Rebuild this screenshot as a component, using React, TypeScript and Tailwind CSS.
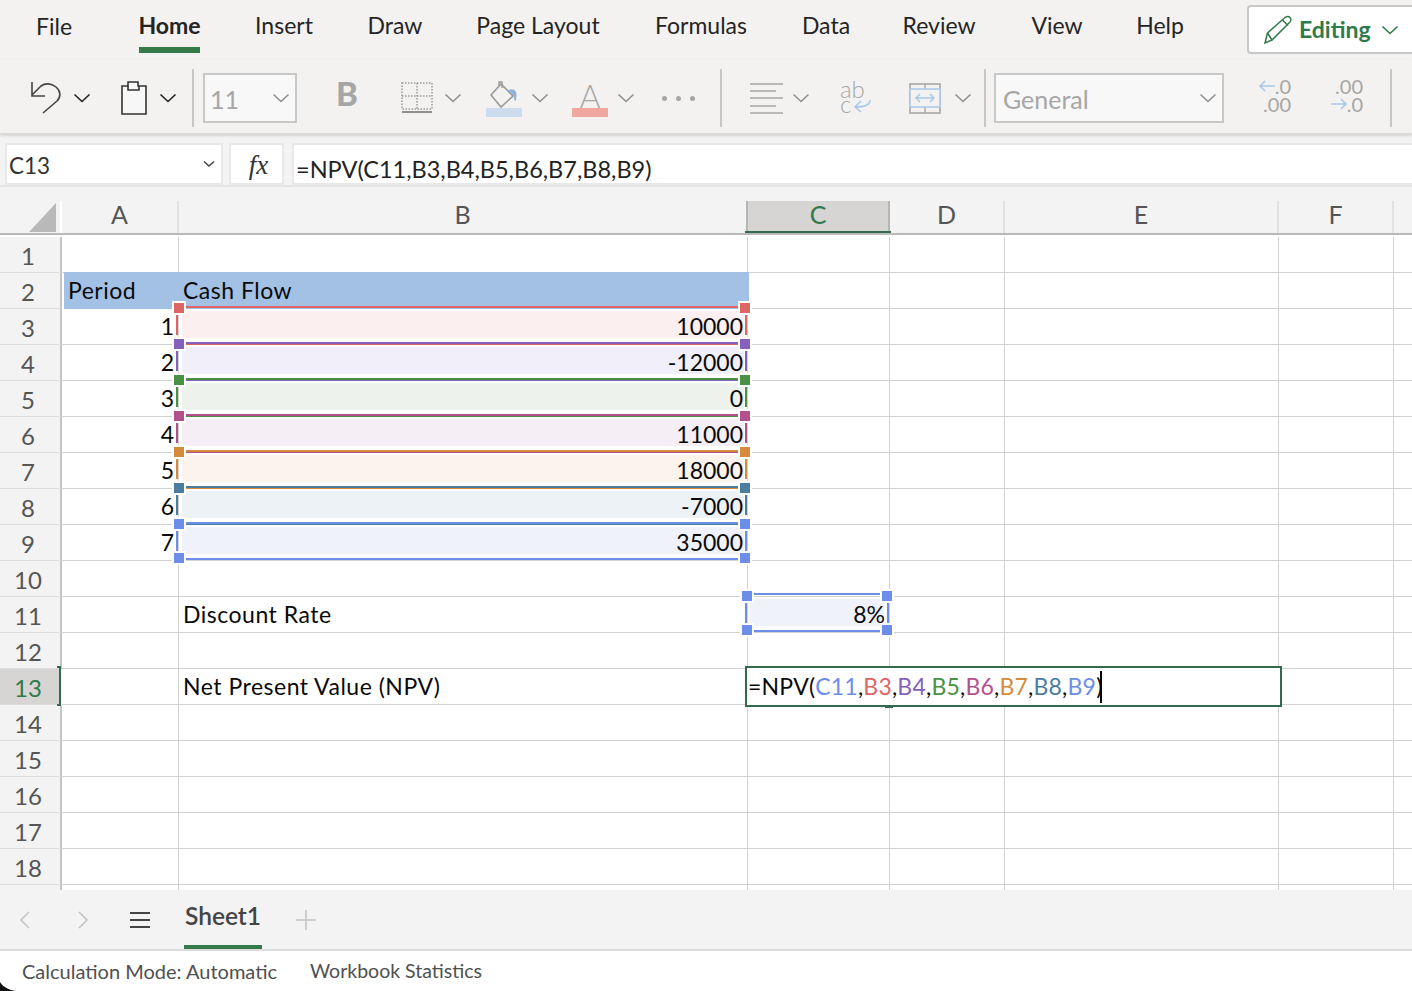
import type { ReactNode } from "react";

const font = { fontFamily: "Lato, 'Open Sans', sans-serif" };

const tabs = [
  { label: "File", width: "w-[36px]", gap: "ml-[36px]" },
  { label: "Home", width: "w-[61px]", gap: "ml-[67px]" },
  { label: "Insert", width: "w-[58px]", gap: "ml-[55px]" },
  { label: "Draw", width: "w-[52px]", gap: "ml-[56px]" },
  { label: "Page Layout", width: "w-[122px]", gap: "ml-[56px]" },
  { label: "Formulas", width: "w-[94px]", gap: "ml-[55px]" },
  { label: "Data", width: "w-[46px]", gap: "ml-[55px]" },
  { label: "Review", width: "w-[70px]", gap: "ml-[55px]" },
  { label: "View", width: "w-[50px]", gap: "ml-[58px]" },
  { label: "Help", width: "w-[46px]", gap: "ml-[55px]" },
];

const columns = ["A", "B", "C", "D", "E", "F", ""];

const cashFlow: Record<number, { period: string; value: string; line: string; fill: string }> = {
  3: { period: "1", value: "10000", line: "bg-[#dd6563]", fill: "bg-[#fbefef]" },
  4: { period: "2", value: "-12000", line: "bg-[#8660bd]", fill: "bg-[#f1eff9]" },
  5: { period: "3", value: "0", line: "bg-[#4a9145]", fill: "bg-[#edf3ec]" },
  6: { period: "4", value: "11000", line: "bg-[#b3508e]", fill: "bg-[#f6eef5]" },
  7: { period: "5", value: "18000", line: "bg-[#d68a3c]", fill: "bg-[#fbf3ec]" },
  8: { period: "6", value: "-7000", line: "bg-[#4b7d9f]", fill: "bg-[#edf2f6]" },
  9: { period: "7", value: "35000", line: "bg-[#6d8ee8]", fill: "bg-[#eff2fb]" },
};

const formulaRefs = [
  { text: "C11", color: "text-[#6d8ee8]" },
  { text: "B3", color: "text-[#dd6563]" },
  { text: "B4", color: "text-[#8660bd]" },
  { text: "B5", color: "text-[#4a9145]" },
  { text: "B6", color: "text-[#b3508e]" },
  { text: "B7", color: "text-[#d68a3c]" },
  { text: "B8", color: "text-[#4b7d9f]" },
  { text: "B9", color: "text-[#6d8ee8]" },
];

function Chevron({ dark, className }: { dark?: boolean; className?: string }) {
  return (
    <svg width="18" height="10" viewBox="0 0 18 10" className={className}>
      <path d="M1.500 1.500 9 8.500l7.500-7" fill="none" stroke={dark ? "#222" : "#8f8f8f"} strokeWidth="1.6" />
    </svg>
  );
}

function Separator({ className }: { className?: string }) {
  return <div className={`w-[2px] h-[58px] bg-[#c8c6c4] ${className ?? ""}`} />;
}

function Handle({ color, className }: { color: string; className: string }) {
  return <span className={`absolute w-[14px] h-[14px] border-2 border-white z-20 ${color} ${className}`} />;
}

// coloured range marker, sits on top of the cell it marks
function RangeMark({ line, fill, last, compact }: { line: string; fill: string; last?: boolean; compact?: boolean }) {
  return (
    <>
      <span className={`absolute top-[2px] bottom-[6px] z-0 ${compact ? "left-[2px] right-[5px]" : "left-[3px] right-[3px]"} ${fill}`} />
      <span className={`absolute h-[2px] z-10 ${line} ${compact ? "top-[-4px] left-[3px] right-[3px]" : "top-[-3px] left-[6px] right-[8px]"}`} />
      <span className={`absolute h-[2px] z-[5] ${line} ${last ? "bottom-0" : "bottom-[-1px]"} ${compact ? "left-[3px] right-[3px]" : "left-[6px] right-[8px]"}`} />
      <span className={`absolute top-[6px] h-[20px] w-[2px] z-10 left-[-3px] ${line}`} />
      <span className={`absolute top-[6px] h-[20px] w-[2px] z-10 right-0 ${line}`} />
      <Handle color={line} className={compact ? "top-[-8px] left-[-8px]" : "top-[-8px] left-[-7px]"} />
      <Handle color={line} className="top-[-8px] right-[-5px]" />
      {last && (
        <>
          <Handle color={line} className={compact ? "bottom-[-5px] left-[-8px]" : "bottom-[-5px] left-[-7px]"} />
          <Handle color={line} className="bottom-[-5px] right-[-5px]" />
        </>
      )}
    </>
  );
}

function Cell({ children, className }: { children?: ReactNode; className?: string }) {
  return (
    <div className={`relative flex items-center border-r border-b border-[#d2d2d2] text-[23px] text-[#0a0a0a] whitespace-nowrap ${className ?? ""}`}>
      {children}
    </div>
  );
}

function GridRow({ row }: { row: number }) {
  const flow = cashFlow[row];
  const active = row === 13;

  return (
    <div className="grid grid-cols-[62px_117px_569px_142px_115px_274px_115px_1fr] grid-rows-[36px] h-[36px] shrink-0">
      <div
        className={`relative flex items-center justify-center border-b border-b-[#dcdcdc] border-r-2 text-[24px] leading-none pt-[2px] pr-[4px] ${
          active ? "bg-[#d6d5d3] border-r-white text-[#2f7a4a]" : "bg-[#f3f3f3] border-r-[#c4c4c4] text-[#555]"
        }`}
      >
        {row < 19 ? row : ""}
        {active && (
          <span className="absolute right-[-1px] top-[-3px] bottom-[-2px] w-[4px] border-y-2 border-r-2 border-[#33694c] z-10" />
        )}
      </div>

      {row === 2 ? (
        <>
          <Cell className="bg-[#a3c1e4] ml-[2px] -mt-px border-r-0 border-b-0 pl-[4px] tracking-[0.5px]">Period</Cell>
          <Cell className="bg-[#a3c1e4] -mt-px border-r-0 border-b-0 pl-[4px] mr-[-1px] tracking-[0.5px]">Cash Flow</Cell>
        </>
      ) : (
        <>
          <Cell className="justify-end pr-[4px]">{flow?.period}</Cell>
          <Cell className={flow ? "justify-end pr-[4px]" : "pl-[4px] tracking-[0.5px]"}>
            {flow && <RangeMark line={flow.line} fill={flow.fill} last={row === 9} />}
            <span className="relative z-10">
              {flow?.value}
              {row === 11 && "Discount Rate"}
              {row === 13 && "Net Present Value (NPV)"}
            </span>
          </Cell>
        </>
      )}

      <Cell className={row === 11 ? "justify-end pr-[4px]" : ""}>
        {row === 11 && (
          <>
            <RangeMark line="bg-[#6d8ee8]" fill="bg-[#eff2fb]" last compact />
            <span className="relative z-10">8%</span>
          </>
        )}
        {active && <FormulaEditor />}
      </Cell>
      <Cell />
      <Cell />
      <Cell />
      <Cell className="border-r-0" />
    </div>
  );
}

function FormulaEditor() {
  return (
    <>
      <div className="absolute left-[-3px] top-[-3px] w-[537px] h-[41px] z-30 flex items-center bg-white border-2 border-[#33694c] pl-[1px] text-[23px] text-[#0a0a0a] tracking-[0.2px]">
        <span>=NPV(</span>
        {formulaRefs.map((ref, i) => (
          <span key={ref.text}>
            {i > 0 && ","}
            <span className={ref.color}>{ref.text}</span>
          </span>
        ))}
        <span>)</span>
        <span className="w-[2px] h-[32px] bg-black ml-[-2px]" />
      </div>
      <span className="absolute right-[-4px] bottom-[-4px] w-[8px] h-[3px] bg-[#33694c] z-30" />
    </>
  );
}

function IconGroup({ children, className }: { children: ReactNode; className?: string }) {
  return <div className={`flex items-center shrink-0 ${className ?? ""}`}>{children}</div>;
}

function SelectBox({ children, width, textClass }: { children: string; width: string; textClass: string }) {
  return (
    <div className={`h-[50px] flex items-center justify-between border-2 border-[#c8c8c8] bg-[#f8f8f8] text-[#a6a6a6] text-[25px] shrink-0 ${width} ${textClass}`}>
      <span className="pt-[3px]">{children}</span>
      <Chevron className="mr-[5px]" />
    </div>
  );
}

function Toolbar() {
  return (
    <div className="h-[75px] shrink-0 flex items-center bg-[#f3f2f1] border-b-2 border-[#dadada] shadow-sm pl-[29px] pt-[3px] z-10">
      <IconGroup>
        <svg width="34" height="36" viewBox="0 0 34 36">
          <path
            d="M3 2v14h13M3 15 12 6c4-3 10-3 15 1 5 4 5 10 1 14L14 33"
            fill="none"
            stroke="#444"
            strokeWidth="1.6"
          />
        </svg>
        <Chevron dark className="ml-[10px]" />
      </IconGroup>
      <IconGroup className="ml-[29px]">
        <svg width="28" height="34" viewBox="0 0 28 34">
          <path d="M2 5h6V1h10v4h8v28H2Z" fill="#f7f7f7" stroke="#333" strokeWidth="1.6" />
          <path d="M8 5v4h11V5" fill="none" stroke="#333" strokeWidth="1.6" />
        </svg>
        <Chevron dark className="ml-[11px]" />
      </IconGroup>
      <Separator className="ml-[15px]" />
      <SelectBox width="w-[94px] ml-[9px]" textClass="pl-[5px]">11</SelectBox>

      <span className="ml-[39px] mb-[10px] text-[33px] font-black text-[#a6a6a6] leading-none w-[22px] shrink-0">B</span>

      <IconGroup className="ml-[43px]">
        <svg width="32" height="32" viewBox="0 0 32 32">
          <path
            d="M1 1h30v26H1ZM16 1v26M1 14h30"
            fill="none"
            stroke="#9a9a9a"
            strokeWidth="1.5"
            strokeDasharray="1.5 1.5"
          />
          <path d="M1 30h30" stroke="#8f8f8f" strokeWidth="2" />
        </svg>
        <Chevron className="ml-[11px]" />
      </IconGroup>

      <IconGroup className="ml-[23px]">
        <svg width="38" height="36" viewBox="0 0 38 36" className="mt-[2px]">
          <path d="M6 14 16 3l12 12-12 11Z" fill="none" stroke="#9a9a9a" strokeWidth="1.6" />
          <path d="M14 5V1h3v6" fill="none" stroke="#9a9a9a" strokeWidth="1.4" />
          <path d="M22 10c4-3 8-2 9 1 1 3 0 6 0 9-2 0-2-4-3-6-1-2-3-3-6-4Z" fill="#8fb4dc" />
          <rect x="1" y="27" width="36" height="9" fill="#ccdcee" />
        </svg>
        <Chevron className="ml-[8px]" />
      </IconGroup>

      <IconGroup className="ml-[23px]">
        <div className="relative w-[36px] h-[36px] mt-[2px] flex justify-center">
          <span className="text-[#a6a6a6] text-[33px] font-light leading-[30px]">A</span>
          <span className="absolute left-0 right-0 bottom-0 h-[9px] bg-[#efa7a0]" />
        </div>
        <Chevron className="ml-[9px]" />
      </IconGroup>

      <div className="flex gap-[9px] ml-[27px] shrink-0">
        <span className="w-[5px] h-[5px] rounded-full bg-[#a6a6a6]" />
        <span className="w-[5px] h-[5px] rounded-full bg-[#a6a6a6]" />
        <span className="w-[5px] h-[5px] rounded-full bg-[#a6a6a6]" />
      </div>

      <Separator className="ml-[25px]" />

      <IconGroup className="ml-[27px]">
        <svg width="34" height="32" viewBox="0 0 34 32">
          <path d="M1 2h33M1 9h26M1 16h33M1 24h26M1 31h33" stroke="#a6a6a6" strokeWidth="1.6" />
        </svg>
        <Chevron className="ml-[9px]" />
      </IconGroup>

      <div className="relative ml-[30px] w-[32px] h-[34px] shrink-0 text-[#a6a6a6] text-[24px] leading-[15px] font-light">
        <div>ab</div>
        <div>c</div>
        <svg width="20" height="14" viewBox="0 0 20 14" className="absolute right-0 bottom-[2px]">
          <path d="M18 1c0 5-4 7-14 7M9 2 3 8l6 5" fill="none" stroke="#a9c8e8" strokeWidth="1.6" />
        </svg>
      </div>

      <IconGroup className="ml-[37px]">
        <svg width="32" height="31" viewBox="0 0 32 31">
          <rect x="1" y="1" width="30" height="29" fill="none" stroke="#a6a6a6" strokeWidth="1.6" />
          <path d="M16 1v6M16 24v6" stroke="#a6a6a6" strokeWidth="1.4" />
          <rect x="1" y="6" width="30" height="18" fill="#f3f2f1" stroke="#a9c8e8" strokeWidth="1.5" />
          <path d="M7 15h18M11 11l-4 4 4 4M21 11l4 4-4 4" fill="none" stroke="#a9c8e8" strokeWidth="1.5" />
        </svg>
        <Chevron className="ml-[13px]" />
      </IconGroup>

      <Separator className="ml-[12px]" />
      <SelectBox width="w-[230px] ml-[8px]" textClass="pl-[7px]">General</SelectBox>

      <div className="relative ml-[34px] mb-[7px] w-[33px] h-[36px] shrink-0 text-[#a6a6a6] text-[20px] leading-[18px] text-right">
        <div>.0</div>
        <div>.00</div>
        <svg width="18" height="12" viewBox="0 0 18 12" className="absolute left-0 top-[3px]">
          <path d="M17 6H2M7 1 2 6l5 5" fill="none" stroke="#a9c8e8" strokeWidth="1.6" />
        </svg>
      </div>

      <div className="relative ml-[39px] mb-[7px] w-[33px] h-[36px] shrink-0 text-[#a6a6a6] text-[20px] leading-[18px] text-right">
        <div>.00</div>
        <div>.0</div>
        <svg width="18" height="12" viewBox="0 0 18 12" className="absolute left-0 top-[21px]">
          <path d="M1 6h15M11 1l5 5-5 5" fill="none" stroke="#a9c8e8" strokeWidth="1.6" />
        </svg>
      </div>

      <Separator className="ml-[27px]" />
    </div>
  );
}

export default function App() {
  const rows = Array.from({ length: 19 }, (_, i) => i + 1);

  return (
    <div style={font} className="relative w-[1412px] h-[991px] overflow-hidden flex flex-col bg-white text-[#252423]">
      {/* Ribbon tabs */}
      <div className="h-[60px] shrink-0 flex items-start bg-[#f3f2f1] text-[23px] text-[#252423]">
        {tabs.map((tab) => {
          const current = tab.label === "Home";
          return (
            <div
              key={tab.label}
              className={`relative shrink-0 h-[53px] flex justify-center whitespace-nowrap ${tab.label === "File" ? "pt-[9px]" : "pt-[8px]"} ${tab.width} ${tab.gap}`}
            >
              <span className={current ? "font-bold" : ""}>{tab.label}</span>
              {current && <span className="absolute left-0 right-0 bottom-0 h-[6px] bg-[#33794a]" />}
            </div>
          );
        })}
        <div className="ml-[64px] mt-[5px] flex-1 h-[49px] flex items-center bg-white border-2 border-r-0 border-[#c8c8c8] rounded-l-[4px] text-[#2f7a4a] font-bold text-[23px]">
          <svg width="30" height="30" viewBox="0 0 30 30" className="ml-[14px] shrink-0">
            <path
              d="M2 28 4.500 18 22 2.500c2-1.500 4-1.500 5 0 1.500 1.500 1 3.500-.5 5L9 25Z M4.500 18 9 25M19.500 5l5.500 5.500"
              fill="none"
              stroke="#2f7a4a"
              strokeWidth="1.5"
            />
          </svg>
          <span className="ml-[6px]">Editing</span>
          <svg width="18" height="10" viewBox="0 0 18 10" className="ml-[10px] shrink-0">
            <path d="M1.500 1.500 9 8.500l7.500-7" fill="none" stroke="#2f7a4a" strokeWidth="1.6" />
          </svg>
        </div>
      </div>

      <Toolbar />

      {/* Formula bar */}
      <div className="h-[52px] shrink-0 flex bg-[#f3f3f3] pt-[8px] border-b-2 border-[#e6e6e6] text-[23.5px] leading-none">
        <div className="ml-[5px] w-[218px] flex items-center justify-between bg-white border-2 border-[#e8e8e8] pl-[2px] pr-[6px] text-[#333] text-[22.5px]">
          <span className="pt-[4px]">C13</span>
          <svg width="12" height="8" viewBox="0 0 12 8">
            <path d="M1 1.500 6 6l5-4.500" fill="none" stroke="#444" strokeWidth="1.5" />
          </svg>
        </div>
        <div
          className="ml-[6px] w-[55px] flex items-center justify-center bg-white border-2 border-[#e8e8e8] text-[#333] italic text-[27px] pt-[3px] pl-[4px]"
          style={{ fontFamily: "'Liberation Serif', serif" }}
        >
          fx
        </div>
        <div className="ml-[8px] flex-1 flex items-center bg-white border-2 border-r-0 border-[#e8e8e8] pl-[2px] pt-[11px] text-[#222]">
          =NPV(C11,B3,B4,B5,B6,B7,B8,B9)
        </div>
      </div>

      {/* Column headers */}
      <div className="h-[48px] shrink-0 grid grid-cols-[62px_117px_569px_142px_115px_274px_115px_1fr] grid-rows-[32px] bg-[#f3f3f3] border-b-2 border-[#b9b9b9] pt-[14px]">
        <div className="flex justify-end items-end pr-[4px] pb-[1px] border-r-2 border-white">
          <svg width="27" height="29" viewBox="0 0 27 29">
            <path d="M27 0v29H0Z" fill="#b9b9b9" />
          </svg>
        </div>
        {columns.map((col) => (
          <div
            key={col}
            className={`relative flex items-center justify-center text-[25px] leading-none border-r-2 pb-[6px] ${
              col === "C"
                ? "bg-[#d6d5d3] text-[#2f7a4a] border-[#b5b5b5] border-l-2 -ml-[2px]"
                : col === ""
                  ? "border-transparent"
                  : "text-[#555] border-[#e2e2e2]"
            }`}
          >
            {col}
            {col === "C" && <span className="absolute left-[-3px] right-[-3px] bottom-0 h-[2px] bg-[#33694c]" />}
          </div>
        ))}
      </div>

      {/* Cells */}
      <div className="flex-1 min-h-0 flex flex-col overflow-hidden pt-[2px]">
        {rows.map((row) => (
          <GridRow key={row} row={row} />
        ))}
      </div>

      {/* Sheet tabs */}
      <div className="h-[61px] shrink-0 flex bg-[#f3f3f3] border-b-2 border-[#dcdcdc]">
        <svg width="12" height="18" viewBox="0 0 12 18" className="ml-[19px] mt-[21px]">
          <path d="M10 1 2 9l8 8" fill="none" stroke="#c4c4c4" strokeWidth="1.6" />
        </svg>
        <svg width="12" height="18" viewBox="0 0 12 18" className="ml-[46px] mt-[21px]">
          <path d="m2 1 8 8-8 8" fill="none" stroke="#c4c4c4" strokeWidth="1.6" />
        </svg>
        <svg width="22" height="18" viewBox="0 0 22 18" className="ml-[40px] mt-[21px]">
          <path d="M1 2h20M1 9h20M1 16h20" stroke="#444" strokeWidth="1.8" />
        </svg>
        <div className="relative ml-[33px] w-[78px] h-[59px] flex justify-center pt-[8px] text-[24.5px] text-[#444] font-semibold">
          Sheet1
          <span className="absolute left-0 right-0 bottom-0 h-[4px] bg-[#33794a]" />
        </div>
        <svg width="20" height="20" viewBox="0 0 20 20" className="ml-[34px] mt-[20px]">
          <path d="M10 0v20M0 10h20" stroke="#c4c4c4" strokeWidth="1.6" />
        </svg>
      </div>

      {/* Status bar */}
      <div className="h-[40px] shrink-0 flex items-center bg-white text-[20px] text-[#505050] pl-[22px]">
        <span>Calculation Mode: Automatic</span>
        <span className="ml-[33px] text-[19.5px]">Workbook Statistics</span>
      </div>

      {/* window corner */}
      <svg width="16" height="9" viewBox="0 0 16 9" className="absolute left-0 bottom-0">
        <path d="M0 0c3 5 9 8 16 9H0Z" fill="#111" />
      </svg>
    </div>
  );
}
